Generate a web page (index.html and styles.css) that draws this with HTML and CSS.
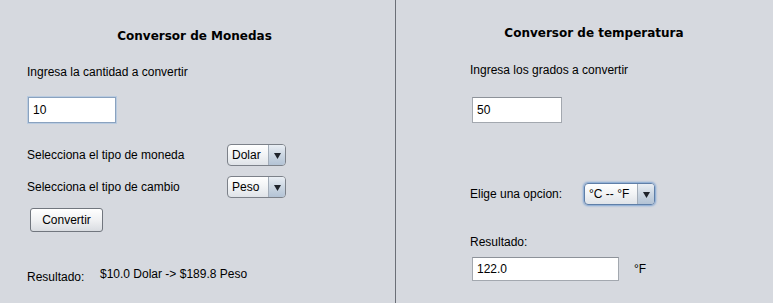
FILE: index.html
```html
<!DOCTYPE html>
<html lang="es">
  <head>
    <meta charset="UTF-8" />
    <meta name="viewport" content="width=device-width, initial-scale=1.0" />
    <title>Conversor</title>
    <link rel="stylesheet" href="styles.css">
  </head>
  <body>
    <div class="app">
      <!-- monedas -->
      <div class="panel panel_money">
        <div class="title">Conversor de Monedas</div>
        <div class="panel_body">
          <div class="label label_amount">Ingresa la cantidad a convertir</div>
          <input class="field field_amount focused" type="text" value="10" />
          <div class="row row_first">
            <span class="row_label">Selecciona el tipo de moneda</span>
            <div class="combo combo_money">
              <span class="combo_value">Dolar</span>
              <span class="combo_arrow"><svg width="7" height="7" viewBox="0 0 7 7"><polygon points="0,1 7,1 3.5,7" fill="#1e232b" /></svg></span>
            </div>
          </div>
          <div class="row row_second">
            <span class="row_label">Selecciona el tipo de cambio</span>
            <div class="combo combo_money">
              <span class="combo_value">Peso</span>
              <span class="combo_arrow"><svg width="7" height="7" viewBox="0 0 7 7"><polygon points="0,1 7,1 3.5,7" fill="#1e232b" /></svg></span>
            </div>
          </div>
          <button class="btn">Convertir</button>
          <div class="result_row">
            <span class="result_label">Resultado:</span>
            <span class="result_value">$10.0 Dolar -&gt; $189.8 Peso</span>
          </div>
        </div>
      </div>

      <!-- temperatura -->
      <div class="panel panel_temp">
        <div class="title">Conversor de temperatura</div>
        <div class="panel_body">
          <div class="label label_degrees">Ingresa los grados a convertir</div>
          <input class="field field_degrees" type="text" value="50" />
          <div class="row row_option">
            <span class="option_label">Elige una opcion:</span>
            <div class="combo combo_temp">
              <span class="combo_value">°C -- °F</span>
              <span class="combo_arrow"><svg width="7" height="7" viewBox="0 0 7 7"><polygon points="0,1 7,1 3.5,7" fill="#1e232b" /></svg></span>
            </div>
          </div>
          <div class="label label_result">Resultado:</div>
          <div class="row row_out">
            <input class="field field_out" type="text" value="122.0" />
            <span class="unit">°F</span>
          </div>
        </div>
      </div>
    </div>
  </body>
</html>
```

FILE: styles.css
```css
body {
  margin: 0;
  background-color: #d6d9df;
  font-family: "Liberation Sans", Arial, sans-serif;
  font-size: 12px;
  color: #000;
}
.app {
  display: flex;
  width: 773px;
  height: 303px;
  overflow: hidden;
}
.panel {
  height: 303px;
}
.panel_money {
  width: 395px;
  border-right: 1px solid #6b6f77;
}
.panel_temp {
  flex: 1;
}
.title {
  font-family: "DejaVu Sans", Tahoma, sans-serif;
  font-weight: bold;
  font-size: 12px;
  line-height: 16px;
  text-align: center;
}
.panel_money .title {
  margin-top: 28px;
  padding-right: 6px;
}
.panel_temp .title {
  margin-top: 25px;
  padding-left: 19px;
}
.panel_money .panel_body {
  padding-left: 27px;
}
.panel_temp .panel_body {
  padding-left: 74px;
}
.label {
  line-height: 16px;
}
.label_amount {
  margin-top: 20px;
}
.label_degrees {
  margin-top: 21px;
}
.label_result {
  margin-top: 29px;
}
.field {
  display: block;
  box-sizing: border-box;
  height: 26px;
  margin: 0 0 0 1px;
  padding: 0 0 0 4px;
  border: 1px solid #a3a8af;
  border-top-color: #8d9299;
  background: #fff;
  font-family: "Liberation Sans", Arial, sans-serif;
  font-size: 12px;
  color: #000;
  outline: none;
}
.field_amount {
  width: 88px;
  margin-top: 17px;
}
.focused {
  border: 1px solid #8aa2bf;
  box-shadow: 0 0 0 1px #b9cbe0;
}
.field_degrees {
  width: 90px;
  margin-top: 19px;
  margin-left: 2px;
}
.field_out {
  width: 147px;
  height: 24px;
  margin-left: 2px;
}
.row {
  display: flex;
  align-items: center;
}
.row_label {
  width: 200px;
}
.row_first {
  margin-top: 21px;
}
.row_second {
  margin-top: 10px;
}
.row_option {
  margin-top: 60px;
}
.option_label {
  width: 114px;
}
.row_out {
  margin-top: 7px;
}
.unit {
  margin-left: 15px;
}
.combo {
  display: flex;
  box-sizing: border-box;
  height: 22px;
  border: 1px solid #7c8189;
  border-radius: 4px;
  background: linear-gradient(#ffffff, #f1f3f5 50%, #dfe3e8);
  overflow: hidden;
}
.combo_money {
  width: 59px;
}
.combo_temp {
  width: 71px;
  box-shadow: 0 0 2px 1px #7fa4d3;
  border-color: #5f7fa8;
}
.combo_value {
  flex: 1;
  padding-left: 4px;
  line-height: 20px;
  white-space: nowrap;
}
.combo_arrow {
  width: 16px;
  display: flex;
  align-items: center;
  justify-content: center;
  border-left: 1px solid #a3adb9;
  background: linear-gradient(#e9eef4, #cbd6e2 50%, #b3c3d5);
}
.btn {
  display: block;
  box-sizing: border-box;
  width: 73px;
  height: 24px;
  margin: 10px 0 0 3px;
  padding: 0;
  border: 1px solid #71767e;
  border-radius: 3px;
  background: linear-gradient(#ffffff, #f0f1f3 50%, #d9dce1);
  font-family: "Liberation Sans", Arial, sans-serif;
  font-size: 12px;
  color: #000;
}
.result_row {
  display: flex;
  align-items: flex-start;
  margin-top: 34px;
  line-height: 16px;
}
.result_label {
  width: 73px;
  margin-top: 3px;
}
```
